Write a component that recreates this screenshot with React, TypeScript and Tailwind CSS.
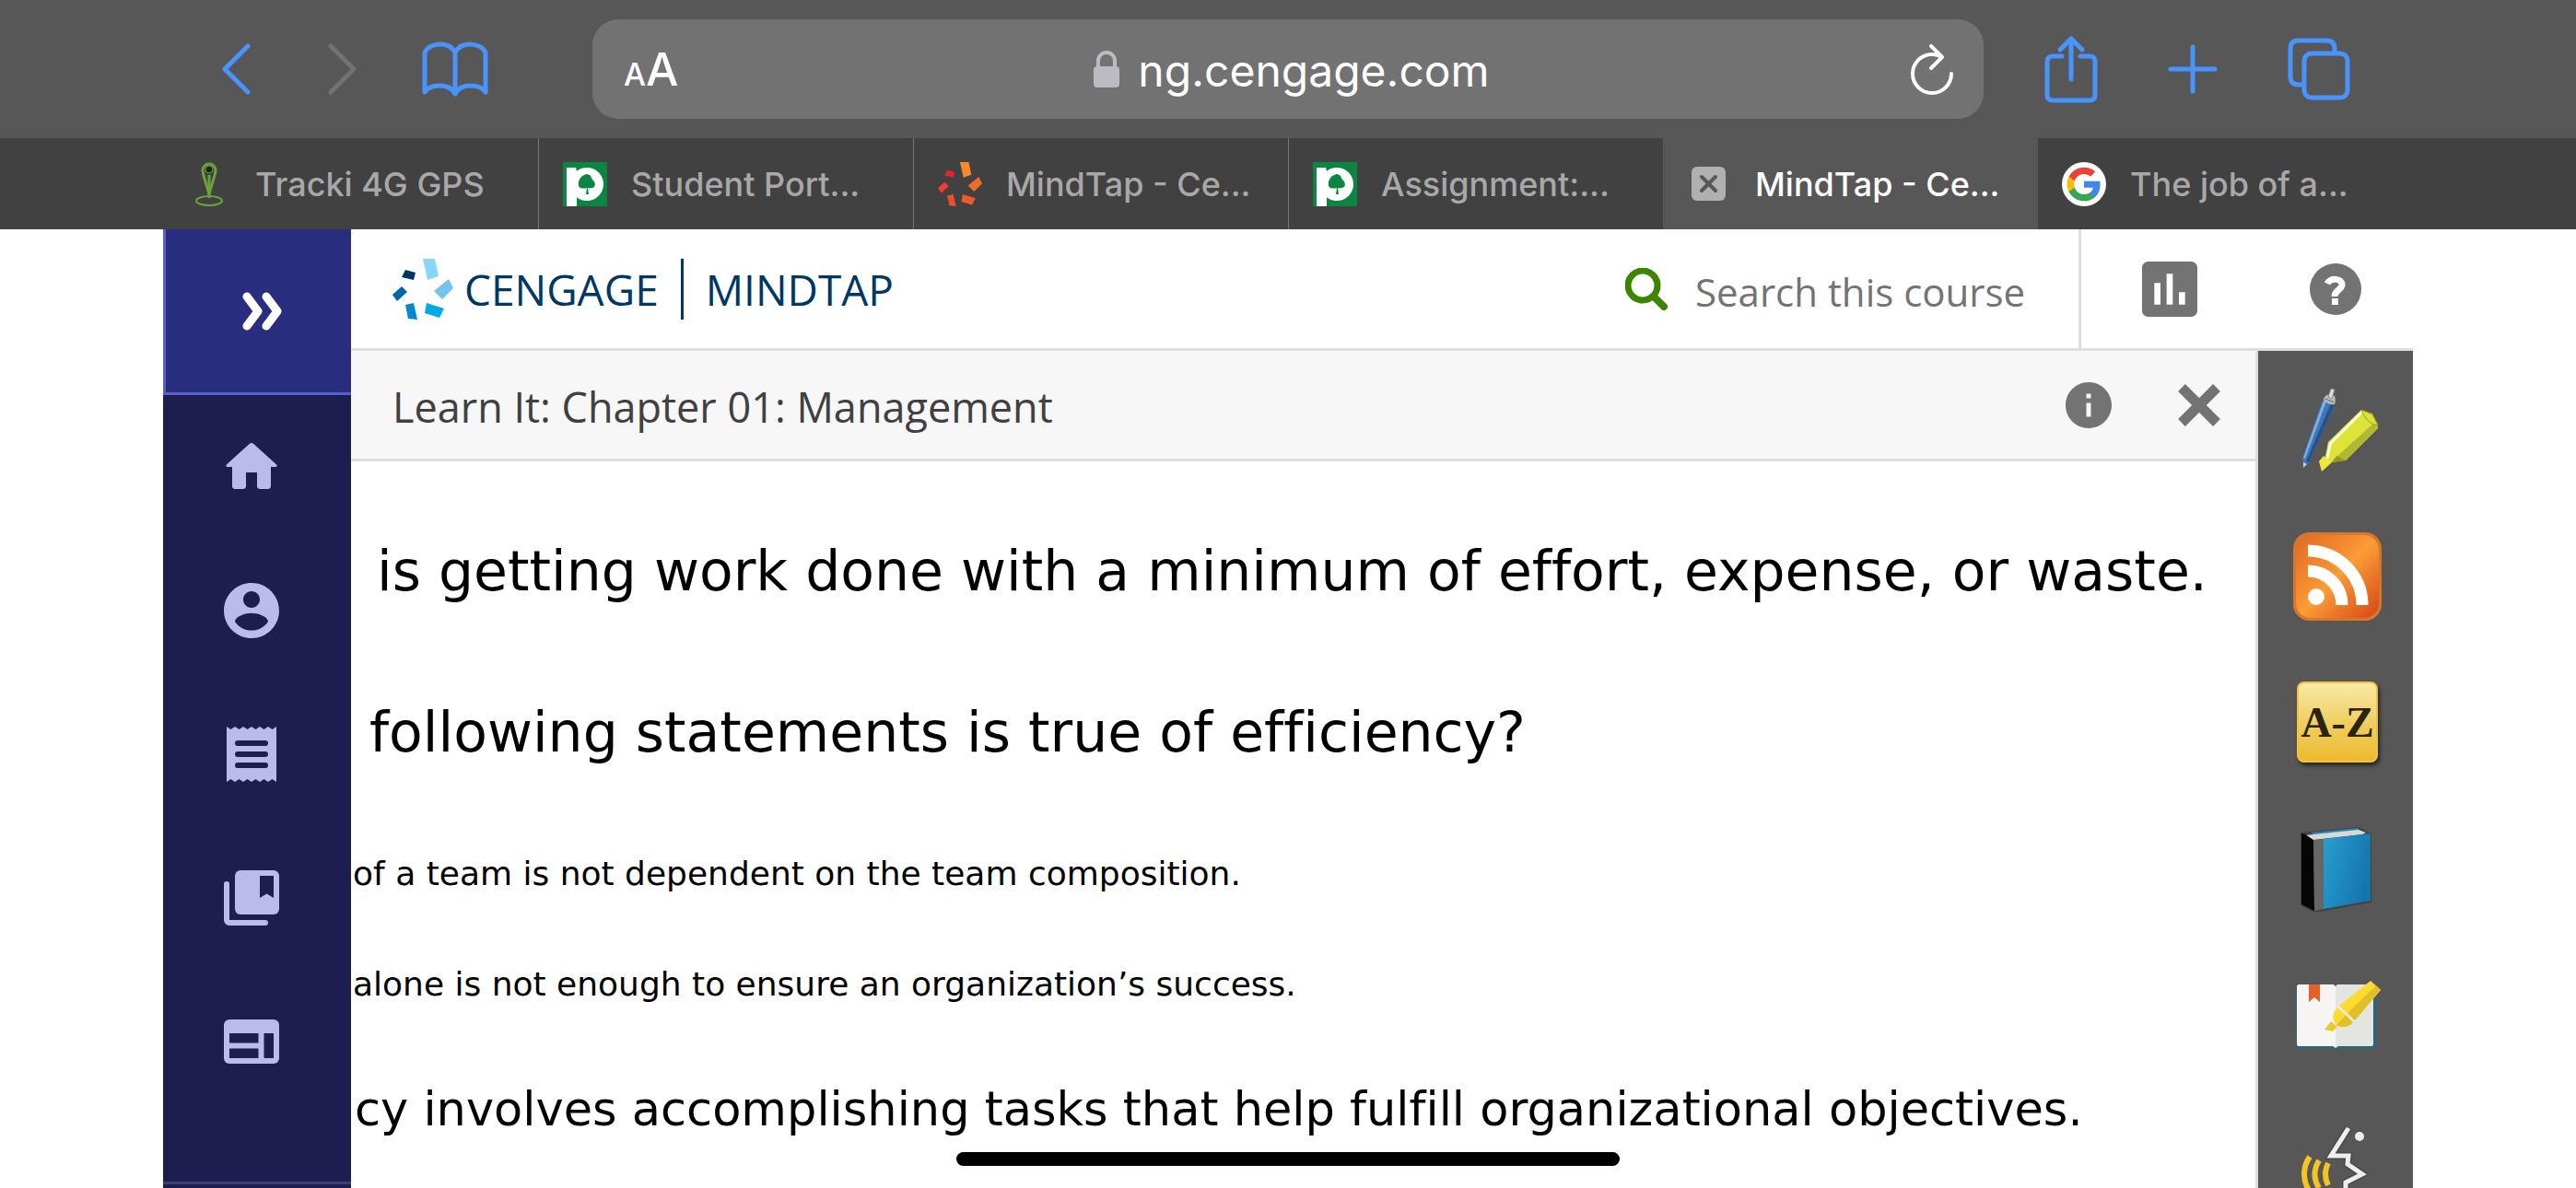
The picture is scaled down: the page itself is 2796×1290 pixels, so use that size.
import type { ReactNode } from 'react';
import { MdAssessment, MdInfo } from 'react-icons/md';

interface Tab {
  title: string;
  icon: ReactNode;
  active?: boolean;
}

const cengageBlue = ['#86d7f9', '#72c4e8', '#003865', '#0068a4', '#0088cf', '#00aae4'];
const cengageRed = ['#f58a2d', '#f36c27', '#e5252a', '#ee4030', '#f04e2a', '#f15a24'];

const cengageShapes = [
  '33,0 46,0 50,19 38,23',
  '61,22 66,32 54,44 45,35',
  '14,12 25,15 23,23 10,20',
  '10,30 16,36 5,46 0,39',
  '14,50 23,48 27,66 17,65',
  '37,48 56,54 51,64 35,59',
];

function CengageMark({ colors, className }: { colors: string[]; className: string }) {
  return (
    <svg viewBox="0 0 66 66" className={className} aria-hidden="true">
      {cengageShapes.map((points, i) => (
        <polygon key={points} points={points} fill={colors[i]} />
      ))}
    </svg>
  );
}

function TrackiIcon() {
  return (
    <svg viewBox="0 0 48 48" className="size-12" fill="none" stroke="#6aa33a" aria-hidden="true">
      <path d="M17 9a7 7 0 0 1 14 0c0 5-5 17-7 26-2-9-7-21-7-26z" strokeWidth="3" />
      <path d="M24 14v25" strokeWidth="3" />
      <circle cx="24" cy="8" r="4" fill="#222" strokeWidth="1" />
      <ellipse cx="24" cy="42" rx="14" ry="5" strokeWidth="2" />
    </svg>
  );
}

function PortalIcon() {
  return (
    <svg viewBox="0 0 48 48" className="size-12" aria-hidden="true">
      <rect width="48" height="48" fill="#0d8542" />
      <path d="M4 6h10l1 4v38H4z" fill="#fff" />
      <circle cx="26" cy="24" r="18" fill="#fff" />
      <path d="M26 13c5 1 4 3 6 6 4 3 4 9-1 9-2 1-3 0-4 0l1 7h-3l1-7c-3 1-9 1-9-3-1-4 2-11 9-12z" fill="#0d8542" />
    </svg>
  );
}

function GoogleIcon() {
  return (
    <span className="flex size-12 items-center justify-center rounded-full bg-white">
      <svg viewBox="0 0 24 24" className="size-10" aria-hidden="true">
        <path fill="#4285F4" d="M22.56 12.25c0-.78-.07-1.53-.2-2.25H12v4.26h5.92c-.26 1.37-1.04 2.53-2.21 3.31v2.77h3.57c2.08-1.92 3.28-4.74 3.28-8.09z" />
        <path fill="#34A853" d="M12 23c2.97 0 5.46-.98 7.28-2.66l-3.57-2.77c-.98.66-2.23 1.06-3.71 1.06-2.86 0-5.29-1.93-6.16-4.53H2.18v2.84C3.99 20.53 7.7 23 12 23z" />
        <path fill="#FBBC05" d="M5.84 14.09c-.22-.66-.35-1.36-.35-2.09s.13-1.43.35-2.09V7.07H2.18C1.43 8.55 1 10.22 1 12s.43 3.45 1.18 4.93l2.85-2.22.81-.62z" />
        <path fill="#EA4335" d="M12 5.38c1.62 0 3.06.56 4.21 1.64l3.15-3.15C17.45 2.09 14.97 1 12 1 7.7 1 3.99 3.47 2.18 7.07l3.66 2.84c.87-2.6 3.3-4.53 6.16-4.53z" />
      </svg>
    </span>
  );
}

function CloseTabIcon() {
  return (
    <svg viewBox="0 0 48 48" className="size-12" aria-hidden="true">
      <rect x="5" y="5" width="37" height="37" rx="6" fill="#b0b0b0" />
      <path d="M16 16l15 15M31 16L16 31" stroke="#575757" strokeWidth="4" strokeLinecap="round" />
    </svg>
  );
}

const tabs: Tab[] = [
  { title: 'Tracki 4G GPS', icon: <TrackiIcon /> },
  { title: 'Student Port...', icon: <PortalIcon /> },
  { title: 'MindTap - Ce...', icon: <CengageMark colors={cengageRed} className="size-12" /> },
  { title: 'Assignment:...', icon: <PortalIcon /> },
  { title: 'MindTap - Ce...', icon: <CloseTabIcon />, active: true },
  { title: 'The job of a...', icon: <GoogleIcon /> },
];

function BrowserToolbar() {
  return (
    <div className="flex h-[150px] shrink-0 items-center bg-[#575757] px-[177px] text-[#4894ff]">
      <div className="flex items-center pr-[84px] pl-[22px]">
        <button aria-label="Back" className="flex w-[115px] justify-center">
          <svg width="34" height="58" viewBox="0 0 34 58" fill="none" stroke="currentColor" strokeWidth="5" strokeLinecap="round" strokeLinejoin="round">
            <path d="M29 4L4 29l25 25" />
          </svg>
        </button>
        <button aria-label="Forward" className="flex w-[115px] justify-center text-[#727274]">
          <svg width="34" height="58" viewBox="0 0 34 58" fill="none" stroke="currentColor" strokeWidth="5" strokeLinecap="round" strokeLinejoin="round">
            <path d="M4 4l25 25L4 54" />
          </svg>
        </button>
        <button aria-label="Bookmarks" className="flex w-[130px] justify-center">
          <svg width="72" height="62" viewBox="0 0 72 62" fill="none" stroke="currentColor" strokeWidth="5" strokeLinejoin="round">
            <path d="M36 58V13C33 7 27 4 20 4S6 7 3 13v43c3-5 10-7 17-7s13 3 16 9c3-6 9-9 16-9s14 2 17 7V13c-3-6-10-9-17-9S39 7 36 13" />
          </svg>
        </button>
      </div>
      <div className="grid h-[108px] min-w-0 flex-1 grid-cols-[1fr_auto_1fr] items-center rounded-[28px] bg-[#727272] pr-8 pl-[34px] text-white">
        <button aria-label="Page settings" className="flex items-baseline justify-self-start font-medium text-white">
          <span className="text-[34px]">A</span>
          <span className="text-[50px]">A</span>
        </button>
        <label className="flex items-center gap-5 pl-1.5">
          <svg width="28" height="40" viewBox="0 0 28 40" aria-hidden="true">
            <rect y="17" width="28" height="23" rx="4" fill="#bcbbc1" />
            <path d="M5 18v-7a9 9 0 0 1 18 0v7" fill="none" stroke="#bcbbc1" strokeWidth="4" />
          </svg>
          <input aria-label="Address" defaultValue="ng.cengage.com" className="field-sizing-content bg-transparent pt-1 text-[48px] outline-none" />
        </label>
        <button aria-label="Reload" className="justify-self-end">
          <svg width="48" height="58" viewBox="0 0 48 58" fill="none" stroke="currentColor" strokeWidth="4" strokeLinecap="round" strokeLinejoin="round">
            <path d="M45 34a21 21 0 1 1-21-21c4 0 7 1 10 2" />
            <path d="M23 4l12 12-12 12" />
          </svg>
        </button>
      </div>
      <div className="flex items-center pr-[31px] pl-[29px]">
        <button aria-label="Share" className="flex w-[132px] justify-center">
          <svg width="58" height="74" viewBox="0 0 58 74" fill="none" stroke="currentColor" strokeWidth="5" strokeLinecap="round" strokeLinejoin="round">
            <path d="M19 23H9c-4 0-6 2-6 6v36c0 4 2 6 6 6h40c4 0 6-2 6-6V29c0-4-2-6-6-6H39" />
            <path d="M29 48V4M17 16L29 4l12 12" />
          </svg>
        </button>
        <button aria-label="New tab" className="flex w-[132px] justify-center">
          <svg width="56" height="56" viewBox="0 0 56 56" stroke="currentColor" strokeWidth="5" strokeLinecap="round">
            <path d="M28 4v48M4 28h48" />
          </svg>
        </button>
        <button aria-label="All tabs" className="flex w-[142px] justify-center">
          <svg width="68" height="68" viewBox="0 0 68 68" fill="none" stroke="currentColor" strokeWidth="5">
            <rect x="18" y="17" width="47" height="48" rx="8" />
            <path d="M18 51h-6c-6 0-9-3-9-9V12c0-6 3-9 9-9h30c6 0 9 3 9 9v5" />
          </svg>
        </button>
      </div>
    </div>
  );
}

function TabBar() {
  return (
    <div className="grid h-[99px] shrink-0 grid-cols-6 bg-[#414141] px-[177px]">
      {tabs.map((tab, i) => (
        <button
          key={i}
          className={`flex min-w-0 items-center gap-[26px] pl-[26px] text-[36px] font-medium whitespace-nowrap ${
            tab.active ? 'bg-[#575757] text-white' : 'text-[#a8a8a8]'
          } ${i > 0 && i < 4 ? 'border-l border-[#767676]' : ''}`}
        >
          {tab.icon}
          <span>{tab.title}</span>
        </button>
      ))}
    </div>
  );
}

const sideItems: { label: string; shape: ReactNode }[] = [
  {
    label: 'Home',
    shape: <path d="M10 19v-5h4v5c0 .55.45 1 1 1h3c.55 0 1-.45 1-1v-7h1.7c.46 0 .68-.57.33-.87L12.67 3.6c-.38-.34-.96-.34-1.34 0l-8.36 7.53c-.34.3-.13.87.33.87H5v7c0 .55.45 1 1 1h3c.55 0 1-.45 1-1z" />,
  },
  {
    label: 'Account',
    shape: <path d="M12 2C6.48 2 2 6.48 2 12s4.48 10 10 10 10-4.48 10-10S17.52 2 12 2zm0 3c1.66 0 3 1.34 3 3s-1.34 3-3 3-3-1.34-3-3 1.34-3 3-3zm0 14.2c-2.5 0-4.71-1.28-6-3.22.03-1.99 4-3.08 6-3.08 1.99 0 5.97 1.09 6 3.08-1.29 1.94-3.5 3.22-6 3.22z" />,
  },
  {
    label: 'Assignments',
    shape: (
      <>
        <path d="M3 2l1.5 1L6 2l1.5 1L9 2l1.5 1L12 2l1.5 1L15 2l1.5 1L18 2l1.5 1L21 2v20l-1.5-1-1.5 1-1.5-1-1.5 1-1.5-1-1.5 1-1.5-1L9 22l-1.5-1L6 22l-1.5-1L3 22z" />
        <path d="M7 8h10M7 12h10M7 16h10" stroke="#1b1e4f" strokeWidth="2" strokeLinecap="round" />
      </>
    ),
  },
  {
    label: 'Collections',
    shape: (
      <>
        <rect x="6" y="2" width="16" height="16" rx="2" />
        <path d="M15 4h5v8l-2.5-1.5L15 12z" fill="#1b1e4f" />
        <path d="M2 7a1 1 0 0 1 2 0v13h13a1 1 0 0 1 0 2H4a2 2 0 0 1-2-2z" />
      </>
    ),
  },
  {
    label: 'Dashboard',
    shape: (
      <>
        <rect x="2" y="4" width="20" height="16" rx="2" />
        <path d="M4 9h10.5v3.5H4zM4 14.5h10.5V18H4zM16.5 9H20v9h-3.5z" fill="#1b1e4f" />
      </>
    ),
  },
];

function SideNav() {
  return (
    <nav className="flex w-[204px] shrink-0 flex-col overflow-hidden bg-[#1b1e4f]">
      <button aria-label="Expand menu" className="flex h-[180px] shrink-0 items-center justify-center border-b-[3px] border-l-[3px] border-[#5a5fd0] bg-[#292d7d] pl-2">
        <svg width="46" height="44" viewBox="0 0 46 44" fill="none" stroke="#fff" strokeWidth="9" strokeLinecap="round" strokeLinejoin="round">
          <path d="M6 6l12 16L6 38M27 6l12 16-12 16" />
        </svg>
      </button>
      {sideItems.map(({ label, shape }) => (
        <a key={label} href="#" aria-label={label} className="flex h-[156px] shrink-0 items-center justify-center pr-3">
          <svg viewBox="0 0 24 24" className="size-[72px]" fill="#babbea">
            {shape}
          </svg>
        </a>
      ))}
      <div className="mt-[74px] h-[3px] shrink-0 bg-[#3c3e78]" />
    </nav>
  );
}

function CourseHeader() {
  return (
    <header className="flex h-[132px] shrink-0 items-stretch border-b-[3px] border-[#dedede] bg-white">
      <a href="#" className="flex items-center pl-[45px] text-[46px] leading-[60px] font-medium text-[#003865]">
        <CengageMark colors={cengageBlue} className="size-[66px]" />
        <span className="pl-3">CENGAGE</span>
        <span className="mx-6 h-[66px] w-[3px] bg-[#003865]" />
        <span>MINDTAP</span>
      </a>
      <label className="ml-auto flex items-center gap-[30px]">
        <svg width="46" height="46" viewBox="0 0 46 46" fill="none" stroke="#3b8500" strokeLinecap="round" aria-hidden="true">
          <circle cx="19" cy="19" r="16" strokeWidth="7" />
          <path d="M32 32l10 10" strokeWidth="8" />
        </svg>
        <input type="search" aria-label="Search this course" placeholder="Search this course" className="w-[416px] bg-transparent pt-1.5 text-[42px] outline-none placeholder:text-[#737373]" />
      </label>
      <div className="flex w-[363px] shrink-0 border-l-[3px] border-[#dedede] pl-1.5 text-[#737373]">
        <button aria-label="Progress" className="flex w-[180px] items-center justify-center">
          <MdAssessment className="size-20" />
        </button>
        <button aria-label="Help" className="flex flex-1 items-center justify-center pl-1.5">
          <svg width="56" height="56" viewBox="0 0 56 56">
            <circle cx="28" cy="28" r="28" fill="currentColor" />
            <path d="M19 22c3-7 17-6 16 2-1 5-8 5-8 12" fill="none" stroke="#fff" strokeWidth="7" />
            <path d="M24 38h7v7h-7z" fill="#fff" />
          </svg>
        </button>
      </div>
    </header>
  );
}

function PenIcon() {
  return (
    <svg viewBox="0 0 96 96" className="size-24">
      <path d="M10 78L32 14l13 5-28 63-6 6z" fill="#3f78b8" />
      <path d="M11 77L33 15l3 1-23 62z" fill="#7fb0e0" />
      <path d="M41 18l4 1-28 63-3-1z" fill="#24528c" />
      <path d="M11 82l4 2-4 4z" fill="#ccc" />
      <path d="M33 14c1-5 6-7 12-4 1 3 1 6 0 9-4 1-9-1-12-5z" fill="#bbb" />
      <path d="M38 11l3-9 4 1-3 10z" fill="#dedede" stroke="#888" strokeWidth="1" />
      <path d="M35 13l9 4" stroke="#666" strokeWidth="1" />
      <path d="M74 25l12 4 6 12v4L57 80l-15 2-8-1 4-21z" fill="#dce43a" />
      <path d="M92 45L57 80l-10-4 42-38z" fill="#b3b833" />
      <path d="M42 82l5-7 10 5z" fill="#93971c" />
      <path d="M74 26L39 61l-4 19 3-1 4-17 34-34z" fill="#fff" opacity=".85" />
      <path d="M74 25c4 10 10 16 18 17l-6-12z" fill="#dce43a" stroke="#8f942a" strokeWidth="1" />
      <path d="M33 75l9 7-11 10-3-11z" fill="#efe83a" />
    </svg>
  );
}

function FeedIcon() {
  return (
    <svg viewBox="0 0 96 96" className="size-24">
      <defs>
        <linearGradient id="feed" x1="0" y1="0" x2="1" y2="1">
          <stop offset="0" stopColor="#dd6a26" />
          <stop offset=".4" stopColor="#f88f31" />
          <stop offset=".5" stopColor="#fb9d37" />
          <stop offset="1" stopColor="#d64514" />
        </linearGradient>
      </defs>
      <rect width="96" height="96" rx="18" fill="#d8762c" />
      <rect x="3" y="3" width="90" height="90" rx="16" fill="url(#feed)" />
      <path d="M16 20A59 59 0 0 1 75 79M16 42a37 37 0 0 1 37 37" fill="none" stroke="#fff" strokeWidth="13" />
      <circle cx="25" cy="70" r="9" fill="#fff" />
    </svg>
  );
}

function GlossaryIcon() {
  return (
    <span className="flex size-24 items-center justify-center">
      <span className="flex size-[88px] items-center justify-center rounded-lg border-2 border-[#efc33f] bg-linear-to-b from-[#faeaa6] via-[#f0cf60] to-[#edb92d] font-['Liberation_Serif',serif] text-[46px] font-bold text-[#2b2410] shadow-[2px_3px_4px_#222]">
        A-Z
      </span>
    </span>
  );
}

function BookIcon() {
  return (
    <svg viewBox="0 0 96 96" className="size-24">
      <defs>
        <linearGradient id="cover" x1="0" y1="0" x2="1" y2=".4">
          <stop offset="0" stopColor="#279fd2" />
          <stop offset="1" stopColor="#1675ad" />
        </linearGradient>
      </defs>
      <path d="M8 10l63-6 14 7v75L23 97 8 89z" fill="#333" opacity=".6" />
      <path d="M20 10l51-5v3l-50 5z" fill="#2187bb" />
      <path d="M13 13l58-6 8 3-4 2-53 6c-4 0-7-2-9-5z" fill="#d8d8d8" />
      <path d="M9 11l4 1 9 6 1 77-14-7z" fill="#050505" />
      <path d="M22 18l11-1v76l-10 2z" fill="#666" />
      <path d="M33 17l51-6v73l-51 9z" fill="url(#cover)" />
    </svg>
  );
}

function NotesIcon() {
  return (
    <svg viewBox="0 0 96 96" className="size-24">
      <path d="M3 20c0-2 1-3 3-3h81l3 3v66H50c-2 4-6 4-8 0H3z" fill="#23697a" />
      <path d="M4 19c0-1 1-2 2-2h38l2 2v67l-3-2H6c-1 0-2-1-2-2z" fill="#f7f5f3" />
      <path d="M46 19l2-2h37c1 0 2 1 2 2v63c0 1-1 2-2 2H49l-3 2z" fill="#e3e5e0" />
      <path d="M17 17h12v19l-6-5-6 5z" fill="#e3602b" />
      <path d="M84 13l11 10-28 33-17-16z" fill="#ffdb2e" />
      <path d="M90 18l5 5-28 33-8-8z" fill="#dfc02a" />
      <path d="M48 42l17 16c-5 6-13 6-18 3-5-5-5-13 1-19z" fill="#ffdb2e" />
      <path d="M57 50l8 8c-5 6-13 6-18 3z" fill="#dfc02a" />
      <path d="M49 41l17 16" stroke="#f0ede4" strokeWidth="2" />
      <path d="M41 57l7 6-5 5-9-2z" fill="#e9cb2b" />
    </svg>
  );
}

function VoiceIcon() {
  return (
    <svg viewBox="0 0 96 96" className="size-24" fill="none">
      <path d="M60 15L41 45h19l-1 9 16 11-18 9v12" stroke="#333" strokeWidth="8" opacity=".4" />
      <path d="M60 15L41 45h19l-1 9 16 11-18 9v12" stroke="#eee" strokeWidth="5" />
      <circle cx="72" cy="24" r="5" fill="#eee" />
      <path d="M18 46c-8 12-8 26 0 38M28 50c-6 10-6 20 0 30M38 53c-4 8-4 16 0 24" stroke="#f3c522" strokeWidth="6" />
    </svg>
  );
}

const tools = [
  { label: 'Highlight', icon: <PenIcon /> },
  { label: 'Feed', icon: <FeedIcon /> },
  { label: 'Glossary', icon: <GlossaryIcon /> },
  { label: 'Book', icon: <BookIcon /> },
  { label: 'Notes', icon: <NotesIcon /> },
  { label: 'Read aloud', icon: <VoiceIcon /> },
];

function ToolRail() {
  return (
    <aside className="flex w-[171px] shrink-0 flex-col items-center gap-[62px] overflow-hidden border-l-[3px] border-[#dedede] bg-[#575757] pt-[39px] pl-1">
      {tools.map((tool) => (
        <button key={tool.label} aria-label={tool.label} className="shrink-0">
          {tool.icon}
        </button>
      ))}
    </aside>
  );
}

function Reading() {
  return (
    <section className="flex min-w-0 flex-1 flex-col overflow-hidden">
      <div className="flex h-[120px] shrink-0 items-center border-b-[3px] border-[#dedede] bg-[#f7f7f7] pr-[38px] pl-[45px] text-[#737373]">
        <h1 className="flex-1 pt-1 text-[45px] text-[#404040]">Learn It: Chapter 01: Management</h1>
        <button aria-label="Information" className="mr-[67px]">
          <MdInfo className="size-[60px]" />
        </button>
        <button aria-label="Close">
          <svg width="46" height="46" viewBox="0 0 46 46" stroke="currentColor" strokeWidth="11">
            <path d="M4 4l38 38M42 4L4 42" />
          </svg>
        </button>
      </div>
      <div className="font-['DejaVu_Sans',sans-serif] whitespace-nowrap text-black [font-variant-ligatures:none]">
        <p className="pt-[79px] pl-7 text-[60px] leading-[80px]">
          is getting work done with a minimum of effort, expense, or waste.
        </p>
        <p className="pt-[95px] pl-5 text-[60px] leading-[80px]">following statements is true of efficiency?</p>
        <p className="pt-[90px] pl-0.5 text-[36px] leading-[48px]">of a team is not dependent on the team composition.</p>
        <p className="pt-[72px] pl-0.5 text-[36px] leading-[48px]">alone is not enough to ensure an organization’s success.</p>
        <p className="pt-20 pl-1 text-[51px] leading-[64px]">
          cy involves accomplishing tasks that help fulfill organizational objectives.
        </p>
      </div>
    </section>
  );
}

export default function App() {
  return (
    <div className="relative flex h-screen flex-col overflow-hidden bg-white font-['Inter',sans-serif]">
      <BrowserToolbar />
      <TabBar />
      <div className="flex min-h-0 flex-1 px-[177px] font-['Open_Sans',sans-serif]">
        <SideNav />
        <div className="flex min-w-0 flex-1 flex-col">
          <CourseHeader />
          <main className="flex min-h-0 flex-1">
            <Reading />
            <ToolRail />
          </main>
        </div>
      </div>
      {/* Home indicator */}
      <div className="absolute bottom-6 left-1/2 h-[15px] w-[720px] -translate-x-1/2 rounded-full bg-black" />
    </div>
  );
}
